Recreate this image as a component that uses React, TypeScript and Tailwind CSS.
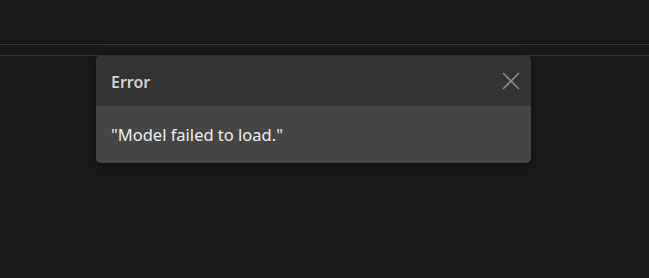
import React from "react";

export default function App() {
  return (
    <div
      className="relative w-[649px] h-[278px] bg-[#19191b] overflow-hidden"
      style={{ fontFamily: '"Segoe UI", "Noto Sans", "Open Sans", sans-serif' }}
    >
      <div className="h-[45px] border-b border-[#3a3a3c]" />
      <div className="h-[11px] border-b border-[#3a3a3c]" />
      <div className="absolute left-[96px] top-[55px] w-[435px] rounded-[5px] overflow-hidden shadow-[0_2px_8px_rgba(0,0,0,0.4)]">
        <div className="h-[51px] bg-[#333333] flex items-center justify-between pl-[15px] pr-[10px] pt-[2px]">
          <span className="text-[16px] font-semibold text-[#d2d2d2] leading-none">Error</span>
          <svg width="18" height="18" viewBox="0 0 18 18" className="mr-[1px] -mt-[2px]">
            <path d="M1 1 L17 17 M17 1 L1 17" stroke="#8a8a8a" strokeWidth="1.6" fill="none" />
          </svg>
        </div>
        <div className="h-[57px] bg-[#454545] flex items-center pl-[15px] pt-[2px]">
          <span className="text-[16.5px] text-[#efefef] leading-none">"Model failed to load."</span>
        </div>
      </div>
    </div>
  );
}
